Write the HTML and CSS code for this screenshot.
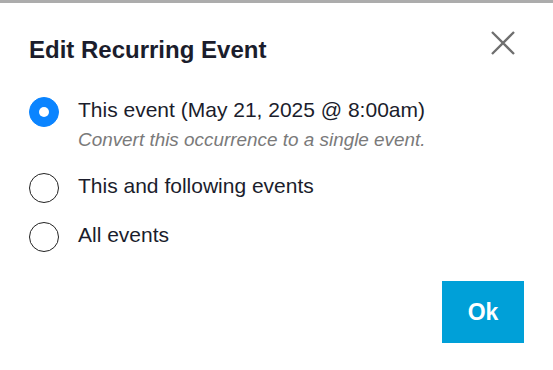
FILE: index.html
```html
<!DOCTYPE html>
<html>
<head>
<meta charset="utf-8">
<link rel="stylesheet" href="styles.css">
</head>
<body>
<div class="dialog">
  <div class="header">
    <h1 class="title">Edit Recurring Event</h1>
    <button class="close" aria-label="Close">
      <svg width="24" height="24" viewBox="0 0 24 24"><path d="M1 1 L23 23 M23 1 L1 23" stroke="#6f6f6f" stroke-width="2.3" fill="none"/></svg>
    </button>
  </div>
  <div class="options">
    <div class="option">
      <span class="radio checked"></span>
      <div class="text">
        <div class="label">This event (May 21, 2025 @ 8:00am)</div>
        <div class="hint">Convert this occurrence to a single event.</div>
      </div>
    </div>
    <div class="option">
      <span class="radio"></span>
      <div class="text"><div class="label">This and following events</div></div>
    </div>
    <div class="option">
      <span class="radio"></span>
      <div class="text"><div class="label">All events</div></div>
    </div>
  </div>
  <div class="footer">
    <button class="ok">Ok</button>
  </div>
</div>
</body>
</html>
```
FILE: styles.css
```css
html, body {
  margin: 0;
  padding: 0;
  background: #ffffff;
}
body {
  border-top: 3px solid #acacac;
  font-family: "Liberation Sans", Arial, sans-serif;
  color: #1b1d2c;
}
.dialog {
  padding: 28px 38px 0 29px;
}
.header {
  display: flex;
  justify-content: space-between;
  align-items: flex-start;
}
.title {
  margin: 5px 0 0 0;
  font-size: 24px;
  line-height: 28px;
  font-weight: bold;
  color: #1b1d2c;
}
.close {
  border: 0;
  background: none;
  padding: 0;
  margin: 0;
  width: 24px;
  height: 24px;
  display: block;
}
.close svg { display: block; }
.options {
  margin-top: 33px;
  display: flex;
  flex-direction: column;
  gap: 19px;
}
.option {
  display: flex;
  align-items: flex-start;
  gap: 19px;
}
.radio {
  box-sizing: border-box;
  width: 30px;
  height: 30px;
  border: 1px solid #222222;
  border-radius: 50%;
  flex: none;
  display: flex;
  align-items: center;
  justify-content: center;
}
.radio.checked {
  background: #0a84ff;
  border-color: #0a84ff;
}
.radio.checked::after {
  content: "";
  width: 10px;
  height: 10px;
  border-radius: 50%;
  background: #ffffff;
}
.text {
  padding-top: 1px;
}
.label {
  font-size: 21px;
  line-height: 24px;
  color: #1b1d2c;
}
.hint {
  margin-top: 6px;
  margin-bottom: 2px;
  font-size: 18.9px;
  line-height: 24px;
  font-style: italic;
  color: #7a7a7a;
}
.footer {
  display: flex;
  justify-content: flex-end;
  margin-top: 29px;
  margin-right: -9px;
}
.ok {
  width: 82px;
  height: 62px;
  border: 0;
  background: #00a0d8;
  color: #ffffff;
  font-family: "Liberation Sans", Arial, sans-serif;
  font-weight: bold;
  font-size: 23px;
  padding: 0;
}
```
